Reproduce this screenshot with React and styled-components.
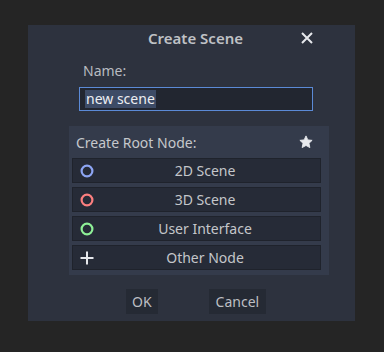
import React from "react";
import styled, { createGlobalStyle } from "styled-components";

const Global = createGlobalStyle`
  html, body { margin: 0; padding: 0; background: #252525; }
  body { font-family: "Noto Sans", "DejaVu Sans", sans-serif; width: 384px; height: 352px; overflow: hidden; }
`;

const Page = styled.div`
  padding: 25px 0 0 28px;
`;

const Dialog = styled.div`
  width: 327px;
  height: 296px;
  background: #2d323e;
  box-sizing: border-box;
  display: flex;
  flex-direction: column;
`;

const TitleBar = styled.div`
  position: relative;
  height: 25px;
  display: flex;
  align-items: center;
  justify-content: center;
  padding-left: 8px;
`;

const Title = styled.div`
  color: #bfc1c5;
  font-size: 15px;
  font-weight: 600;
`;

const Close = styled.div`
  position: absolute;
  left: 272px;
  top: 6px;
  width: 14px;
  height: 14px;
  display: flex;
`;

const Field = styled.div`
  margin: 11px 0 0 51px;
  width: 234px;
  display: flex;
  flex-direction: column;
  gap: 6px;
`;

const Label = styled.div`
  color: #b8bbc0;
  font-size: 14px;
  padding-left: 4px;
  height: 20px;
  line-height: 20px;
`;

const Input = styled.div`
  height: 24px;
  box-sizing: border-box;
  border: 1px solid #5b8ad6;
  background: #222630;
  display: flex;
  align-items: center;
  padding-left: 5px;
`;

const Selected = styled.span`
  background: #3d4b66;
  color: #eceef2;
  font-size: 14px;
  line-height: 18px;
  padding: 0 1px 0 1px;
`;

const Panel = styled.div`
  margin: 15px 0 0 41px;
  width: 260px;
  background: #343b4b;
  padding: 3px 8px 5px 3px;
  box-sizing: border-box;
`;

const PanelHead = styled.div`
  height: 26px;
  display: flex;
  align-items: center;
  justify-content: space-between;
  padding: 0 8px 0 4px;
  color: #c6c8cc;
  font-size: 14px;
  margin-bottom: 3px;
`;

const Rows = styled.div`
  display: flex;
  flex-direction: column;
  gap: 4px;
`;

const Row = styled.div`
  height: 25px;
  box-sizing: border-box;
  background: #262b37;
  border: 1px solid #1f232c;
  display: flex;
  align-items: center;
  padding-left: 7px;
  color: #c4c6ca;
  font-size: 14px;
`;

const RowIcon = styled.div`
  width: 14px;
  height: 14px;
  display: flex;
  align-items: center;
  justify-content: center;
`;

const RowText = styled.div`
  flex: 1;
  text-align: center;
  padding-right: 4px;
`;

const Buttons = styled.div`
  margin-top: 14px;
  display: flex;
  gap: 51px;
  padding-left: 98px;
`;

const Button = styled.div`
  height: 25px;
  padding: 0 ${(p) => p.$pad}px;
  background: #252a34;
  color: #bdbfc3;
  font-size: 14px;
  display: flex;
  align-items: center;
`;

const Ring = ({ color }) => (
  <svg width="14" height="14" viewBox="0 0 14 14">
    <circle cx="7" cy="7" r="5.4" fill="none" stroke={color} strokeWidth="2.2" />
  </svg>
);

const Plus = () => (
  <svg width="14" height="14" viewBox="0 0 14 14">
    <path d="M7 0.5v13M0.5 7h13" stroke="#e6e8ec" strokeWidth="2" />
  </svg>
);

const Star = () => (
  <svg width="14" height="14" viewBox="0 0 24 24">
    <path
      d="M12 1.5l3.2 6.9 7.3.8-5.4 5 1.5 7.4L12 17.9l-6.6 3.7 1.5-7.4-5.4-5 7.3-.8z"
      fill="#e8eaee"
      strokeLinejoin="round"
      stroke="#e8eaee"
      strokeWidth="1.5"
    />
  </svg>
);

const rows = [
  { icon: <Ring color="#8da5f3" />, label: "2D Scene" },
  { icon: <Ring color="#fc7f7f" />, label: "3D Scene" },
  { icon: <Ring color="#8eef97" />, label: "User Interface" },
  { icon: <Plus />, label: "Other Node" },
];

export default function App() {
  return (
    <>
      <Global />
      <Page>
        <Dialog>
          <TitleBar>
            <Title>Create Scene</Title>
            <Close>
              <svg width="14" height="14" viewBox="0 0 14 14">
                <path d="M2 2l10 10M12 2L2 12" stroke="#e6e8ec" strokeWidth="2" />
              </svg>
            </Close>
          </TitleBar>
          <Field>
            <Label>Name:</Label>
            <Input>
              <Selected>new scene</Selected>
            </Input>
          </Field>
          <Panel>
            <PanelHead>
              <span>Create Root Node:</span>
              <Star />
            </PanelHead>
            <Rows>
              {rows.map((r) => (
                <Row key={r.label}>
                  <RowIcon>{r.icon}</RowIcon>
                  <RowText>{r.label}</RowText>
                </Row>
              ))}
            </Rows>
          </Panel>
          <Buttons>
            <Button $pad={6}>OK</Button>
            <Button $pad={7}>Cancel</Button>
          </Buttons>
        </Dialog>
      </Page>
    </>
  );
}
